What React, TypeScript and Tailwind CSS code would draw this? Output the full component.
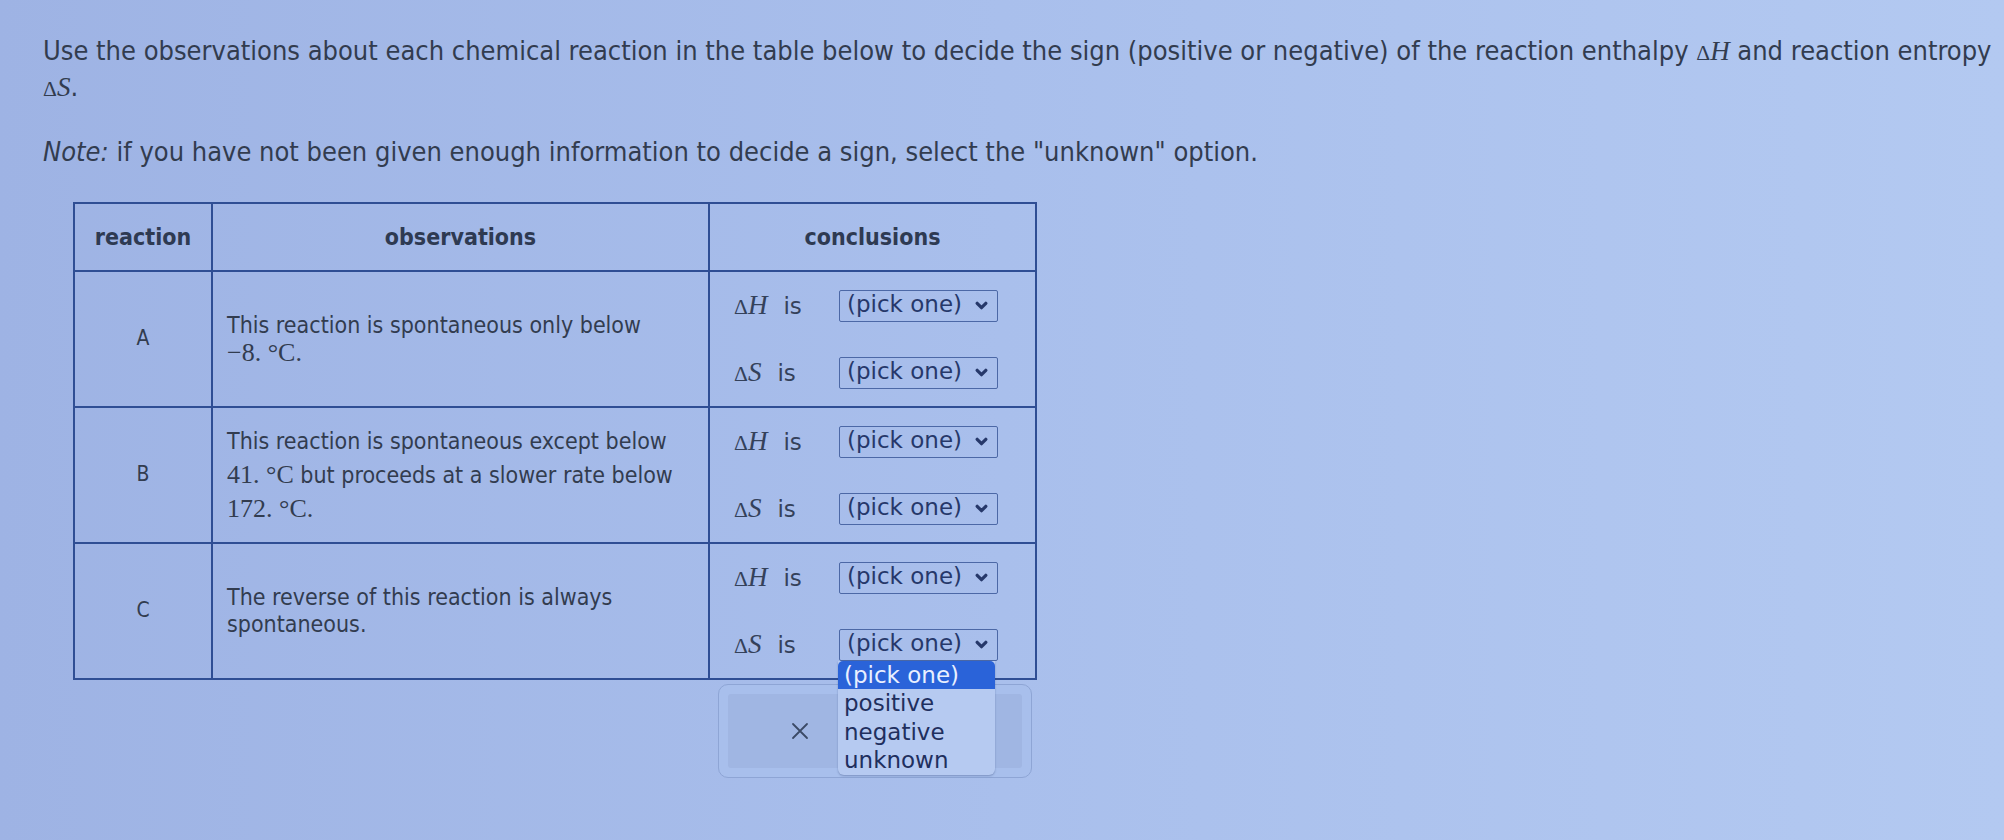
import React from 'react';

const Delta = ({ v }: { v: string }) => (
  <span className="whitespace-nowrap font-['Liberation_Serif',serif]">
    <span className="text-[0.8em]">Δ</span>
    <span className="italic">{v}</span>
  </span>
);

const Chevron = () => (
  <svg viewBox="0 0 12 8" className="h-[9px] w-[13px]" fill="none" stroke="currentColor" strokeWidth={3} strokeLinecap="round" strokeLinejoin="round">
    <path d="M2 2 6 6 10 2" />
  </svg>
);

const PickOne = ({ open = false }: { open?: boolean }) => (
  <div className="relative">
    <div className="flex h-[32px] w-[159px] items-center justify-between rounded-[2px] border border-[#4c68a6] pl-[7px] pr-[9px] font-['DejaVu_Sans',sans-serif] text-[23px] leading-none text-[#26386a]">
      <span className="-mt-[2px]">(pick one)</span>
      <Chevron />
    </div>
    {open && (
      <div className="absolute left-[-1px] top-full z-10 w-[157px] overflow-hidden rounded-b-[6px] bg-[#b6caf1] font-['DejaVu_Sans',sans-serif] text-[23px] leading-[28.5px] text-[#1f2f5e] shadow-[0_1px_2px_rgba(40,60,110,0.35)]">
        <div className="rounded-t-[5px] bg-[#2a63d9] pl-[6px] text-[#e9efff]">(pick one)</div>
        <div className="pl-[6px]">positive</div>
        <div className="pl-[6px]">negative</div>
        <div className="pl-[6px]">unknown</div>
      </div>
    )}
  </div>
);

const Conclusion = ({ v, open = false }: { v: string; open?: boolean }) => (
  <div className="flex h-[67px] items-center pl-[24px]">
    <div className="w-[105px] text-[#34415a]">
      <span className="text-[27px]">
        <Delta v={v} />
      </span>
      <span className="ml-[16px] font-['DejaVu_Sans',sans-serif] text-[23px]">is</span>
    </div>
    <PickOne open={open} />
  </div>
);

const rows = [
  {
    id: 'A',
    obs: (
      <>
        This reaction is spontaneous only below
        <br />
        <span className="font-['Liberation_Serif',serif] text-[26px]">−8. °C.</span>
      </>
    ),
    lh: 'leading-[28px]',
  },
  {
    id: 'B',
    obs: (
      <>
        This reaction is spontaneous except below
        <br />
        <span className="font-['Liberation_Serif',serif] text-[26px]">41. °C</span> but proceeds at a slower rate below
        <br />
        <span className="font-['Liberation_Serif',serif] text-[26px]">172. °C.</span>
      </>
    ),
    lh: 'leading-[34px]',
  },
  {
    id: 'C',
    obs: (
      <>
        The reverse of this reaction is always
        <br />
        spontaneous.
      </>
    ),
    lh: 'leading-[27px]',
  },
];

export default function App() {
  return (
    <div className="min-h-[840px] w-[2004px] bg-gradient-to-r from-[#9eb3e4] via-[#a9bfec] to-[#b3c9f1] font-['DejaVu_Sans_Condensed','DejaVu_Sans',sans-serif] text-[#323c4f]">
      <div className="pl-[43px] pt-[34px]">
        <p className="w-[1952px] text-[27px] leading-[34px]">
          Use the observations about each chemical reaction in the table below to decide the sign (positive or negative) of the reaction enthalpy <Delta v="H" /> and reaction entropy <Delta v="S" />.
        </p>
        <p className="mt-[29px] text-[27px] leading-[34px]">
          <span className="italic">Note:</span> if you have not been given enough information to decide a sign, select the "unknown" option.
        </p>
      </div>

      <div className="ml-[73px] mt-[33px]">
        <table className="border-collapse border-2 border-[#2f4e94] text-[23px]">
          <thead>
            <tr className="h-[68px]">
              <th className="w-[138px] border-2 border-[#2f4e94] font-bold text-[#2e3a52]">reaction</th>
              <th className="w-[497px] border-2 border-[#2f4e94] font-bold text-[#2e3a52]">observations</th>
              <th className="w-[327px] border-2 border-[#2f4e94] font-bold text-[#2e3a52]">conclusions</th>
            </tr>
          </thead>
          <tbody>
            {rows.map((r, i) => (
              <tr key={r.id} className="h-[136px]">
                <td className="border-2 border-[#2f4e94] text-center align-middle text-[21px]">{r.id}</td>
                <td className={`border-2 border-[#2f4e94] pl-[14px] align-middle ${r.lh}`}>{r.obs}</td>
                <td className="border-2 border-[#2f4e94] p-0 align-middle">
                  <Conclusion v="H" />
                  <Conclusion v="S" open={i === 2} />
                </td>
              </tr>
            ))}
          </tbody>
        </table>

        <div className="ml-[645px] mt-[4px] flex h-[94px] w-[314px] gap-[8px] rounded-[10px] border border-[#8ea5d5] bg-[#a8bfec] p-[9px]">
          <div className="flex w-[144px] items-center justify-center rounded-[3px] bg-[#a0b6e3]">
            <svg viewBox="0 0 20 20" className="h-[20px] w-[20px]" stroke="#3b4a66" strokeWidth={1.8} strokeLinecap="round">
              <path d="M3 3 17 17M17 3 3 17" />
            </svg>
          </div>
          <div className="flex-1 rounded-[3px] bg-[#a0b6e3]" />
        </div>
      </div>
    </div>
  );
}
